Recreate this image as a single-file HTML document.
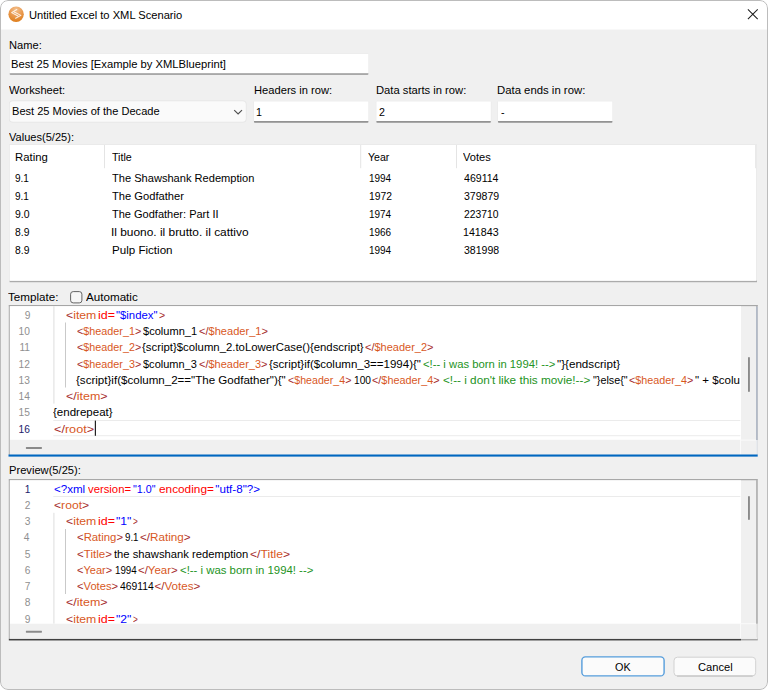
<!DOCTYPE html>
<html lang="en"><head><meta charset="utf-8"><title>Untitled Excel to XML Scenario</title>
<style>
html,body{margin:0;padding:0;background:#fff;}
body{width:768px;height:690px;overflow:hidden;position:relative;font-family:"Liberation Sans",sans-serif;}
#win{position:absolute;left:0;top:0;width:768px;height:690px;background:#f0f0f0;border-radius:8px;overflow:hidden;}
#frame{position:absolute;left:0;top:0;width:768px;height:690px;border:1px solid #bcbcbc;border-radius:8px;z-index:20;}
#win div,#win svg{position:absolute;box-sizing:border-box;}
.t{position:absolute;white-space:pre;line-height:14px;transform-origin:0 50%;font-family:"Liberation Sans",sans-serif;z-index:5;}

</style></head>
<body>
<div id="win">
<svg id="bg" width="768" height="690" viewBox="0 0 768 690" style="left:0;top:0">
<defs><radialGradient id="og" cx="0.5" cy="0.2" r="0.85"><stop offset="0" stop-color="#f3c08e"/><stop offset="0.5" stop-color="#e99a50"/><stop offset="1" stop-color="#dd7a14"/></radialGradient></defs>
<rect x="0" y="0" width="768" height="29.5" fill="#fff"/>
<!-- app icon -->
<circle cx="16.1" cy="14.2" r="7.7" fill="url(#og)"/>
<g fill="none" stroke="#fff" stroke-width="1.05" stroke-opacity="0.85" stroke-linejoin="round" stroke-linecap="round"><polyline points="16.8,9.5 11.6,12.6 18.0,16.0"/><polyline points="14.2,12.0 20.9,15.4 15.6,18.3"/></g>
<!-- close -->
<path d="M747.9 9.4 L757.7 19.1 M757.7 9.4 L747.9 19.1" stroke="#1f1f1f" stroke-width="1.05" fill="none"/>

<!-- name input -->
<g id="inputs">
<rect x="9.1" y="53.3" width="359.9" height="21.5" rx="1.5" fill="#e9e9e9"/>
<rect x="9.7" y="73" width="358.7" height="1.8" rx="0.8" fill="#939393"/>
<rect x="9.7" y="53.9" width="358.7" height="19.4" fill="#fff"/>
<!-- combobox -->
<rect x="9" y="100.6" width="237.5" height="22" rx="3.5" fill="#e4e4e4"/>
<rect x="9.7" y="101.3" width="236.1" height="20.4" rx="3" fill="#fafafa"/>
<path d="M234.2 110.1 L238.1 114 L242 110.1" stroke="#4f4f4f" stroke-width="1.15" fill="none"/>
<!-- row inputs -->
<rect x="253.4" y="100.8" width="115.6" height="21.9" rx="1.5" fill="#e9e9e9"/>
<rect x="254" y="120.8" width="114.4" height="1.9" rx="0.8" fill="#939393"/>
<rect x="254" y="101.4" width="114.4" height="19.6" fill="#fff"/>
<rect x="375.8" y="100.8" width="115.6" height="21.9" rx="1.5" fill="#e9e9e9"/>
<rect x="376.4" y="120.8" width="114.4" height="1.9" rx="0.8" fill="#939393"/>
<rect x="376.4" y="101.4" width="114.4" height="19.6" fill="#fff"/>
<rect x="497.4" y="100.8" width="115.6" height="21.9" rx="1.5" fill="#e9e9e9"/>
<rect x="498" y="120.8" width="114.4" height="1.9" rx="0.8" fill="#939393"/>
<rect x="498" y="101.4" width="114.4" height="19.6" fill="#fff"/>
</g>

<!-- values table -->
<rect x="9" y="144.4" width="748" height="137.8" fill="#e6e6e6"/>
<rect x="9.7" y="280.6" width="747.3" height="1.6" fill="#ababab"/>
<rect x="9.7" y="145" width="746.5" height="135.8" fill="#fff"/>
<g fill="#e4e4e4"><rect x="104" y="145" width="1" height="23.2"/><rect x="360.2" y="145" width="1" height="23.2"/><rect x="456" y="145" width="1" height="23.2"/><rect x="755.2" y="145" width="1" height="23.2"/></g>

<!-- checkbox -->
<rect x="70.6" y="291.6" width="11.3" height="11.3" rx="2.6" fill="#f6f6f6" stroke="#646464" stroke-width="1"/>

<!-- template editor -->
<rect x="8.7" y="305" width="749" height="150" fill="#bcbcbc"/>
<rect x="8.9" y="305" width="748.8" height="1.3" fill="#a6a6a6"/>
<rect x="756" y="306.6" width="1.7" height="133.4" fill="#b2bac7"/>
<rect x="756" y="440" width="1.7" height="15" fill="#e8ebef"/>
<rect x="10" y="306.2" width="746" height="148.8" fill="#f0f0f0"/>
<rect x="10" y="306.2" width="731" height="133.6" fill="#fff"/>
<rect x="740.2" y="439.6" width="15.8" height="0.9" fill="#fbfbfb"/>
<rect x="740" y="439.6" width="0.9" height="15" fill="#fbfbfb"/>
<rect x="8.5" y="454.5" width="749.2" height="2.1" fill="#0067c0"/>
<rect x="53.3" y="420" width="687" height="1" fill="#ebebeb"/>
<rect x="53.3" y="435.2" width="687" height="1" fill="#ebebeb"/>
<rect x="53.3" y="306.2" width="1.2" height="97.4" fill="#e3e3e3"/>
<rect x="65" y="322.5" width="1" height="65" fill="#c9c9c9"/>
<rect x="25.9" y="446.9" width="16" height="2" rx="0.4" fill="#8a8a8a"/>
<rect x="748" y="357" width="1.9" height="35" rx="0.9" fill="#8a8a8a"/>
<rect x="94.8" y="420.6" width="1.2" height="15.2" fill="#222"/>

<!-- preview editor -->
<rect x="8.7" y="479.1" width="749" height="161.2" fill="#bcbcbc"/>
<rect x="8.9" y="479.1" width="748.8" height="1.3" fill="#a6a6a6"/>
<rect x="756" y="480.4" width="1.7" height="143.3" fill="#b6b6b6"/>
<rect x="756" y="623.7" width="1.7" height="15.2" fill="#e6e6e6"/>
<rect x="10" y="480.3" width="746" height="157.6" fill="#f0f0f0"/>
<rect x="10" y="480.3" width="731" height="143.4" fill="#fff"/>
<rect x="740.2" y="623.3" width="15.8" height="0.9" fill="#fbfbfb"/>
<rect x="740.1" y="623.5" width="0.9" height="15" fill="#fbfbfb"/>
<rect x="10" y="637.8" width="747" height="1.1" fill="#fcfcfc"/>
<rect x="8.9" y="638.9" width="732.1" height="1.5" fill="#404040"/>
<rect x="741" y="638.9" width="16.7" height="1.4" fill="#a8a8a8"/>
<rect x="53.3" y="496" width="687" height="1" fill="#ebebeb"/>
<rect x="53.3" y="512.8" width="1.2" height="110.8" fill="#e3e3e3"/>
<rect x="65" y="529" width="1" height="65" fill="#c9c9c9"/>
<rect x="25.9" y="630.7" width="16" height="2" rx="0.4" fill="#8a8a8a"/>
<rect x="748" y="496" width="1.9" height="24" rx="0.9" fill="#8a8a8a"/>

<!-- buttons -->
<rect x="581.9" y="656.9" width="82.2" height="19" rx="3.5" fill="#fbfbfb" stroke="#559ddc" stroke-width="1.4"/>
<rect x="674" y="657.2" width="81.7" height="18.8" rx="3.5" fill="#fbfbfb" stroke="#d2d2d2" stroke-width="1"/>
<path d="M677 676 H752.7" stroke="#bdbdbd" stroke-width="1" fill="none"/>
</svg>
<div id="frame"></div>

<span class="t" style="top:8.48px;font-size:11.6px;color:#000;left:28.63px;transform:scaleX(0.9616);">Untitled Excel to XML Scenario</span>
<span class="t" style="top:37.68px;font-size:11.6px;color:#000;left:8.65px;transform:scaleX(0.9584);">Name:</span>
<span class="t" style="top:56.68px;font-size:11.6px;color:#000;left:11.05px;transform:scaleX(0.9665);">Best 25 Movies [Example by XMLBlueprint]</span>
<span class="t" style="top:83.48px;font-size:11.6px;color:#000;left:9.18px;transform:scaleX(0.9615);">Worksheet:</span>
<span class="t" style="top:103.98px;font-size:11.6px;color:#000;left:12.36px;transform:scaleX(0.9542);">Best 25 Movies of the Decade</span>
<span class="t" style="top:83.48px;font-size:11.6px;color:#000;left:253.55px;transform:scaleX(0.9628);">Headers in row:</span>
<span class="t" style="top:83.48px;font-size:11.6px;color:#000;left:375.65px;transform:scaleX(0.9664);">Data starts in row:</span>
<span class="t" style="top:83.48px;font-size:11.6px;color:#000;left:497.05px;transform:scaleX(0.9785);">Data ends in row:</span>
<span class="t" style="top:104.58px;font-size:11.6px;color:#000;left:256.32px;transform:scaleX(0.9200);">1</span>
<span class="t" style="top:104.58px;font-size:11.6px;color:#000;left:379.20px;transform:scaleX(0.9200);">2</span>
<span class="t" style="top:104.58px;font-size:11.6px;color:#000;left:500.96px;transform:scaleX(0.9200);">-</span>
<span class="t" style="top:129.58px;font-size:11.6px;color:#000;left:8.98px;transform:scaleX(0.9539);">Values(5/25):</span>
<span class="t" style="top:149.78px;font-size:11.6px;color:#000;left:15.40px;transform:scaleX(0.9774);">Rating</span>
<span class="t" style="top:149.78px;font-size:11.6px;color:#000;left:111.78px;transform:scaleX(0.9205);">Title</span>
<span class="t" style="top:149.78px;font-size:11.6px;color:#000;left:367.84px;transform:scaleX(0.9111);">Year</span>
<span class="t" style="top:149.78px;font-size:11.6px;color:#000;left:462.95px;transform:scaleX(0.9563);">Votes</span>
<span class="t" style="top:170.68px;font-size:11.6px;color:#000;left:15.32px;transform:scaleX(0.8659);">9.1</span>
<span class="t" style="top:170.68px;font-size:11.6px;color:#000;left:111.88px;transform:scaleX(0.9560);">The Shawshank Redemption</span>
<span class="t" style="top:170.68px;font-size:11.6px;color:#000;left:369.10px;transform:scaleX(0.8586);">1994</span>
<span class="t" style="top:170.68px;font-size:11.6px;color:#000;left:463.90px;transform:scaleX(0.9120);">469114</span>
<span class="t" style="top:188.83px;font-size:11.6px;color:#000;left:15.32px;transform:scaleX(0.8659);">9.1</span>
<span class="t" style="top:188.83px;font-size:11.6px;color:#000;left:112.05px;transform:scaleX(0.9616);">The Godfather</span>
<span class="t" style="top:188.83px;font-size:11.6px;color:#000;left:368.74px;transform:scaleX(0.8918);">1972</span>
<span class="t" style="top:188.83px;font-size:11.6px;color:#000;left:463.79px;transform:scaleX(0.9093);">379879</span>
<span class="t" style="top:206.98px;font-size:11.6px;color:#000;left:15.45px;transform:scaleX(0.9003);">9.0</span>
<span class="t" style="top:206.98px;font-size:11.6px;color:#000;left:112.23px;transform:scaleX(0.9501);">The Godfather: Part II</span>
<span class="t" style="top:206.98px;font-size:11.6px;color:#000;left:369.10px;transform:scaleX(0.8586);">1974</span>
<span class="t" style="top:206.98px;font-size:11.6px;color:#000;left:463.90px;transform:scaleX(0.8918);">223710</span>
<span class="t" style="top:225.13px;font-size:11.6px;color:#000;left:15.44px;transform:scaleX(0.8928);">8.9</span>
<span class="t" style="top:225.13px;font-size:11.6px;color:#000;left:111.11px;transform:scaleX(1.0261);">Il buono. il brutto. il cattivo</span>
<span class="t" style="top:225.13px;font-size:11.6px;color:#000;left:369.10px;transform:scaleX(0.8586);">1966</span>
<span class="t" style="top:225.13px;font-size:11.6px;color:#000;left:463.35px;transform:scaleX(0.9192);">141843</span>
<span class="t" style="top:243.28px;font-size:11.6px;color:#000;left:15.44px;transform:scaleX(0.8928);">8.9</span>
<span class="t" style="top:243.28px;font-size:11.6px;color:#000;left:111.96px;">Pulp Fiction</span>
<span class="t" style="top:243.28px;font-size:11.6px;color:#000;left:369.10px;transform:scaleX(0.8586);">1994</span>
<span class="t" style="top:243.28px;font-size:11.6px;color:#000;left:463.99px;transform:scaleX(0.9105);">381998</span>
<span class="t" style="top:289.98px;font-size:11.6px;color:#000;left:8.28px;transform:scaleX(1.0023);">Template:</span>
<span class="t" style="top:289.98px;font-size:11.6px;color:#000;left:85.75px;transform:scaleX(1.0036);">Automatic</span>
<span class="t" style="top:463.18px;font-size:11.6px;color:#000;left:9.09px;transform:scaleX(0.9616);">Preview(5/25):</span>
<span class="t" style="top:659.73px;font-size:11.6px;color:#000;left:615.33px;transform:scaleX(0.9309);">OK</span>
<span class="t" style="top:659.73px;font-size:11.6px;color:#000;left:697.72px;transform:scaleX(0.9590);">Cancel</span>
<span class="t" style="top:307.88px;font-size:11.6px;color:#8f8f8f;right:738.00px;transform-origin:100% 50%;transform:scaleX(0.8800);">9</span>
<span class="t" style="top:307.88px;font-size:11.6px;color:#000;left:65.52px;transform:scaleX(1.0572);"><span style="color:#a52a2a">&lt;</span><span style="color:#d8581e">item</span></span>
<span class="t" style="top:307.88px;font-size:11.6px;color:#000;left:98.28px;transform:scaleX(1.0732);"><span style="color:#ff0000">id=</span></span>
<span class="t" style="top:307.88px;font-size:11.6px;color:#000;left:116.07px;transform:scaleX(0.9792);"><span style="color:#0000ff">"$index"</span></span>
<span class="t" style="top:307.88px;font-size:11.6px;color:#000;left:159.12px;transform:scaleX(0.9105);"><span style="color:#a52a2a">&gt;</span></span>
<span class="t" style="top:324.14px;font-size:11.6px;color:#8f8f8f;right:738.00px;transform-origin:100% 50%;transform:scaleX(0.8800);">10</span>
<span class="t" style="top:324.14px;font-size:11.6px;color:#000;left:77.42px;transform:scaleX(0.9314);"><span style="color:#a52a2a">&lt;</span><span style="color:#d8581e">$header_1</span><span style="color:#a52a2a">&gt;</span></span>
<span class="t" style="top:324.14px;font-size:11.6px;color:#000;left:143.39px;transform:scaleX(0.9539);"><span style="color:#000000">$column_1</span></span>
<span class="t" style="top:324.14px;font-size:11.6px;color:#000;left:198.79px;transform:scaleX(0.9543);"><span style="color:#a52a2a">&lt;/</span><span style="color:#d8581e">$header_1</span><span style="color:#a52a2a">&gt;</span></span>
<span class="t" style="top:340.40px;font-size:11.6px;color:#8f8f8f;right:738.00px;transform-origin:100% 50%;transform:scaleX(0.8800);">11</span>
<span class="t" style="top:340.40px;font-size:11.6px;color:#000;left:77.44px;transform:scaleX(0.9309);"><span style="color:#a52a2a">&lt;</span><span style="color:#d8581e">$header_2</span><span style="color:#a52a2a">&gt;</span></span>
<span class="t" style="top:340.40px;font-size:11.6px;color:#000;left:141.70px;transform:scaleX(0.9797);"><span style="color:#000000">{script}$column_2.toLowerCase(){endscript}</span></span>
<span class="t" style="top:340.40px;font-size:11.6px;color:#000;left:364.79px;transform:scaleX(0.9481);"><span style="color:#a52a2a">&lt;/</span><span style="color:#d8581e">$header_2</span><span style="color:#a52a2a">&gt;</span></span>
<span class="t" style="top:356.66px;font-size:11.6px;color:#8f8f8f;right:738.00px;transform-origin:100% 50%;transform:scaleX(0.8800);">12</span>
<span class="t" style="top:356.66px;font-size:11.6px;color:#000;left:77.42px;transform:scaleX(0.9314);"><span style="color:#a52a2a">&lt;</span><span style="color:#d8581e">$header_3</span><span style="color:#a52a2a">&gt;</span></span>
<span class="t" style="top:356.66px;font-size:11.6px;color:#000;left:143.49px;transform:scaleX(0.9496);"><span style="color:#000000">$column_3</span></span>
<span class="t" style="top:356.66px;font-size:11.6px;color:#000;left:198.77px;transform:scaleX(0.9490);"><span style="color:#a52a2a">&lt;/</span><span style="color:#d8581e">$header_3</span><span style="color:#a52a2a">&gt;</span></span>
<span class="t" style="top:356.66px;font-size:11.6px;color:#000;left:269.43px;transform:scaleX(0.9931);"><span style="color:#000000">{script}if($column_3==1994){"</span></span>
<span class="t" style="top:356.66px;font-size:11.6px;color:#000;left:422.70px;transform:scaleX(0.9730);"><span style="color:#239323">&lt;!-- i was born in 1994! --&gt;</span></span>
<span class="t" style="top:356.66px;font-size:11.6px;color:#000;left:557.34px;transform:scaleX(1.0040);"><span style="color:#000000">"}{endscript}</span></span>
<span class="t" style="top:372.92px;font-size:11.6px;color:#8f8f8f;right:738.00px;transform-origin:100% 50%;transform:scaleX(0.8800);">13</span>
<span class="t" style="top:372.92px;font-size:11.6px;color:#000;left:76.43px;transform:scaleX(0.9977);"><span style="color:#000000">{script}if($column_2=="The Godfather"){"</span></span>
<span class="t" style="top:372.92px;font-size:11.6px;color:#000;left:288.37px;transform:scaleX(0.9184);"><span style="color:#a52a2a">&lt;</span><span style="color:#d8581e">$header_4</span><span style="color:#a52a2a">&gt;</span></span>
<span class="t" style="top:372.92px;font-size:11.6px;color:#000;left:353.92px;transform:scaleX(0.8800);"><span style="color:#000000">100</span></span>
<span class="t" style="top:372.92px;font-size:11.6px;color:#000;left:372.16px;transform:scaleX(0.9351);"><span style="color:#a52a2a">&lt;/</span><span style="color:#d8581e">$header_4</span><span style="color:#a52a2a">&gt;</span></span>
<span class="t" style="top:372.92px;font-size:11.6px;color:#000;left:442.70px;transform:scaleX(1.0140);"><span style="color:#239323">&lt;!-- i don't like this movie!--&gt;</span></span>
<span class="t" style="top:372.92px;font-size:11.6px;color:#000;left:592.70px;transform:scaleX(0.9289);"><span style="color:#000000">"}else{"</span></span>
<span class="t" style="top:372.92px;font-size:11.6px;color:#000;left:629.37px;transform:scaleX(0.9302);"><span style="color:#a52a2a">&lt;</span><span style="color:#d8581e">$header_4</span><span style="color:#a52a2a">&gt;</span></span>
<span class="t" style="top:372.92px;font-size:11.6px;color:#000;left:694.80px;transform:scaleX(0.9961);"><span style="color:#000000">" + $colu</span></span>
<span class="t" style="top:389.18px;font-size:11.6px;color:#8f8f8f;right:738.00px;transform-origin:100% 50%;transform:scaleX(0.8800);">14</span>
<span class="t" style="top:389.18px;font-size:11.6px;color:#000;left:65.77px;transform:scaleX(1.0760);"><span style="color:#a52a2a">&lt;/</span><span style="color:#d8581e">item</span><span style="color:#a52a2a">&gt;</span></span>
<span class="t" style="top:405.44px;font-size:11.6px;color:#8f8f8f;right:738.00px;transform-origin:100% 50%;transform:scaleX(0.8800);">15</span>
<span class="t" style="top:405.44px;font-size:11.6px;color:#000;left:53.43px;transform:scaleX(0.9950);"><span style="color:#000000">{endrepeat}</span></span>
<span class="t" style="top:421.70px;font-size:11.6px;color:#1b1b6b;right:738.00px;transform-origin:100% 50%;transform:scaleX(0.8800);">16</span>
<span class="t" style="top:421.70px;font-size:11.6px;color:#000;left:53.75px;transform:scaleX(1.0911);"><span style="color:#a52a2a">&lt;/</span><span style="color:#d8581e">root</span><span style="color:#a52a2a">&gt;</span></span>
<span class="t" style="top:481.68px;font-size:11.6px;color:#1b1b6b;right:738.00px;transform-origin:100% 50%;transform:scaleX(0.8800);">1</span>
<span class="t" style="top:481.68px;font-size:11.6px;color:#000;left:53.92px;transform:scaleX(0.9981);"><span style="color:#0000ff">&lt;?xml</span></span>
<span class="t" style="top:481.68px;font-size:11.6px;color:#000;left:88.11px;transform:scaleX(0.9752);"><span style="color:#ff0000">version=</span></span>
<span class="t" style="top:481.68px;font-size:11.6px;color:#000;left:133.00px;transform:scaleX(0.9237);"><span style="color:#0000ff">"1.0"</span></span>
<span class="t" style="top:481.68px;font-size:11.6px;color:#000;left:158.86px;transform:scaleX(1.0192);"><span style="color:#ff0000">encoding=</span></span>
<span class="t" style="top:481.68px;font-size:11.6px;color:#000;left:215.33px;"><span style="color:#0000ff">"utf-8"</span><span style="color:#0000ff">?&gt;</span></span>
<span class="t" style="top:497.93px;font-size:11.6px;color:#8f8f8f;right:738.00px;transform-origin:100% 50%;transform:scaleX(0.8800);">2</span>
<span class="t" style="top:497.93px;font-size:11.6px;color:#000;left:53.58px;transform:scaleX(1.0467);"><span style="color:#a52a2a">&lt;</span><span style="color:#d8581e">root</span><span style="color:#a52a2a">&gt;</span></span>
<span class="t" style="top:514.18px;font-size:11.6px;color:#8f8f8f;right:738.00px;transform-origin:100% 50%;transform:scaleX(0.8800);">3</span>
<span class="t" style="top:514.18px;font-size:11.6px;color:#000;left:65.52px;transform:scaleX(1.0572);"><span style="color:#a52a2a">&lt;</span><span style="color:#d8581e">item</span></span>
<span class="t" style="top:514.18px;font-size:11.6px;color:#000;left:98.28px;transform:scaleX(1.0732);"><span style="color:#ff0000">id=</span></span>
<span class="t" style="top:514.18px;font-size:11.6px;color:#000;left:115.86px;transform:scaleX(1.0482);"><span style="color:#0000ff">"1"</span></span>
<span class="t" style="top:514.18px;font-size:11.6px;color:#000;left:132.60px;transform:scaleX(0.7078);"><span style="color:#a52a2a">&gt;</span></span>
<span class="t" style="top:530.43px;font-size:11.6px;color:#8f8f8f;right:738.43px;transform-origin:100% 50%;transform:scaleX(0.8800);">4</span>
<span class="t" style="top:530.43px;font-size:11.6px;color:#000;left:77.09px;transform:scaleX(0.9778);"><span style="color:#a52a2a">&lt;</span><span style="color:#d8581e">Rating</span><span style="color:#a52a2a">&gt;</span></span>
<span class="t" style="top:530.43px;font-size:11.6px;color:#000;left:124.77px;transform:scaleX(0.8399);"><span style="color:#000000">9.1</span></span>
<span class="t" style="top:530.43px;font-size:11.6px;color:#000;left:139.77px;transform:scaleX(1.0065);"><span style="color:#a52a2a">&lt;/</span><span style="color:#d8581e">Rating</span><span style="color:#a52a2a">&gt;</span></span>
<span class="t" style="top:546.68px;font-size:11.6px;color:#8f8f8f;right:738.00px;transform-origin:100% 50%;transform:scaleX(0.8800);">5</span>
<span class="t" style="top:546.68px;font-size:11.6px;color:#000;left:77.49px;transform:scaleX(0.9964);"><span style="color:#a52a2a">&lt;</span><span style="color:#d8581e">Title</span><span style="color:#a52a2a">&gt;</span></span>
<span class="t" style="top:546.68px;font-size:11.6px;color:#000;left:113.75px;transform:scaleX(0.9688);"><span style="color:#000000">the shawshank redemption</span></span>
<span class="t" style="top:546.68px;font-size:11.6px;color:#000;left:249.77px;transform:scaleX(1.0478);"><span style="color:#a52a2a">&lt;/</span><span style="color:#d8581e">Title</span><span style="color:#a52a2a">&gt;</span></span>
<span class="t" style="top:562.93px;font-size:11.6px;color:#8f8f8f;right:738.00px;transform-origin:100% 50%;transform:scaleX(0.8800);">6</span>
<span class="t" style="top:562.93px;font-size:11.6px;color:#000;left:76.93px;transform:scaleX(0.9506);"><span style="color:#a52a2a">&lt;</span><span style="color:#d8581e">Year</span><span style="color:#a52a2a">&gt;</span></span>
<span class="t" style="top:562.93px;font-size:11.6px;color:#000;left:115.00px;transform:scaleX(0.8431);"><span style="color:#000000">1994</span></span>
<span class="t" style="top:562.93px;font-size:11.6px;color:#000;left:137.93px;transform:scaleX(0.9873);"><span style="color:#a52a2a">&lt;/</span><span style="color:#d8581e">Year</span><span style="color:#a52a2a">&gt;</span></span>
<span class="t" style="top:562.93px;font-size:11.6px;color:#000;left:179.83px;transform:scaleX(0.9804);"><span style="color:#239323">&lt;!-- i was born in 1994! --&gt;</span></span>
<span class="t" style="top:579.18px;font-size:11.6px;color:#8f8f8f;right:738.00px;transform-origin:100% 50%;transform:scaleX(0.8800);">7</span>
<span class="t" style="top:579.18px;font-size:11.6px;color:#000;left:77.14px;transform:scaleX(0.9644);"><span style="color:#a52a2a">&lt;</span><span style="color:#d8581e">Votes</span><span style="color:#a52a2a">&gt;</span></span>
<span class="t" style="top:579.18px;font-size:11.6px;color:#000;left:120.00px;transform:scaleX(0.8922);"><span style="color:#000000">469114</span></span>
<span class="t" style="top:579.18px;font-size:11.6px;color:#000;left:154.51px;"><span style="color:#a52a2a">&lt;/</span><span style="color:#d8581e">Votes</span><span style="color:#a52a2a">&gt;</span></span>
<span class="t" style="top:595.43px;font-size:11.6px;color:#8f8f8f;right:738.00px;transform-origin:100% 50%;transform:scaleX(0.8800);">8</span>
<span class="t" style="top:595.43px;font-size:11.6px;color:#000;left:65.77px;transform:scaleX(1.0760);"><span style="color:#a52a2a">&lt;/</span><span style="color:#d8581e">item</span><span style="color:#a52a2a">&gt;</span></span>
<span class="t" style="top:611.68px;font-size:11.6px;color:#8f8f8f;right:738.00px;transform-origin:100% 50%;transform:scaleX(0.8800);">9</span>
<span class="t" style="top:611.68px;font-size:11.6px;color:#000;left:65.52px;transform:scaleX(1.0572);"><span style="color:#a52a2a">&lt;</span><span style="color:#d8581e">item</span></span>
<span class="t" style="top:611.68px;font-size:11.6px;color:#000;left:98.28px;transform:scaleX(1.0732);"><span style="color:#ff0000">id=</span></span>
<span class="t" style="top:611.68px;font-size:11.6px;color:#000;left:115.87px;transform:scaleX(1.0459);"><span style="color:#0000ff">"2"</span></span>
<span class="t" style="top:611.68px;font-size:11.6px;color:#000;left:132.60px;transform:scaleX(0.7078);"><span style="color:#a52a2a">&gt;</span></span>
</div>
</body></html>
